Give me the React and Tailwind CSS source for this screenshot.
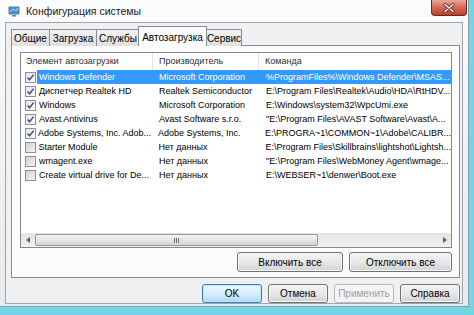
import React from 'react';

const font = "font-['Liberation_Sans',Arial,sans-serif]";

const rows = [
  { on: true, sel: true, name: 'Windows Defender', maker: 'Microsoft Corporation', cmd: '%ProgramFiles%\\Windows Defender\\MSAS...' },
  { on: true, name: 'Диспетчер Realtek HD', maker: 'Realtek Semiconductor', cmd: 'E:\\Program Files\\Realtek\\Audio\\HDA\\RtHDV...' },
  { on: true, name: 'Windows', maker: 'Microsoft Corporation', cmd: 'E:\\Windows\\system32\\WpcUmi.exe' },
  { on: true, name: 'Avast Antivirus', maker: 'Avast Software s.r.o.', cmd: '"E:\\Program Files\\AVAST Software\\Avast\\A...' },
  { on: true, name: 'Adobe Systems, Inc. Adob...', maker: 'Adobe Systems, Inc.', cmd: 'E:\\PROGRA~1\\COMMON~1\\Adobe\\CALIBR...' },
  { on: false, name: 'Starter Module', maker: 'Нет данных', cmd: 'E:\\Program Files\\Skillbrains\\lightshot\\Lightsh...' },
  { on: false, name: 'wmagent.exe', maker: 'Нет данных', cmd: '"E:\\Program Files\\WebMoney Agent\\wmage...' },
  { on: false, name: 'Create virtual drive for De...', maker: 'Нет данных', cmd: 'E:\\WEBSER~1\\denwer\\Boot.exe' },
];

const tabs = [
  { label: 'Общие', w: 'w-[38px]' },
  { label: 'Загрузка', w: 'w-[47px]' },
  { label: 'Службы', w: 'w-[43px]' },
  { label: 'Автозагрузка', w: 'w-[69px]', active: true },
  { label: 'Сервис', w: 'w-[36px]' },
];

function CheckBox({ on }) {
  return (
    <div
      className={`w-[11px] h-[11px] border border-[#8e8f8f] flex items-center justify-center ${
        on ? 'bg-linear-to-br from-[#e4e4e4] to-[#ffffff]' : 'bg-linear-to-br from-[#d2d2d2] to-[#f4f4f4]'
      }`}
    >
      {on && (
        <svg width="9" height="9" viewBox="0 0 9 9">
          <path d="M1.6 4.4 L3.6 6.8 L7.6 1.6" fill="none" stroke="#3b4f88" strokeWidth="1.5" />
        </svg>
      )}
    </div>
  );
}

function Btn({ children, className = '', primary, disabled }) {
  return (
    <div
      className={`h-[19px] rounded-[3px] border flex items-center justify-center text-[10px] ${className} ${
        disabled
          ? 'border-[#b5b9bc] bg-[#f4f4f4] text-[#a0a0a0]'
          : primary
          ? 'border-[#3c7fb1] bg-linear-to-b from-[#eaf6fd] via-[#d9f0fc] to-[#a7d9f5] text-black shadow-[inset_0_0_0_1px_#bfe6f9]'
          : 'border-[#707070] bg-linear-to-b from-[#f2f2f2] via-[#e8e8e8] to-[#d2d2d2] text-black shadow-[inset_0_0_0_1px_#fafafa]'
      }`}
    >
      {children}
    </div>
  );
}

export default function App() {
  return (
    <div className={`w-[474px] h-[315px] overflow-hidden bg-[#74d5e6] ${font}`}>
      {/* window frame */}
      <div className="w-[469px] h-[307px] bg-linear-to-b from-[#fbfcfd] via-[#eef2f6] to-[#e6ebf0] border-r border-b border-[#8a9aa8] flex flex-col">
        {/* title bar */}
        <div className="h-[22px] flex items-start">
          <div className="flex items-center h-[22px] pl-[8px] gap-[6px] flex-1">
            <svg width="12" height="11" viewBox="0 0 12 11">
              <rect x="0.5" y="0.5" width="11" height="8" rx="1" fill="#6d7f93" />
              <rect x="1.5" y="1.5" width="9" height="6" fill="#3f8ee0" />
              <path d="M2 6 L5 3 L8 5 L10 2" stroke="#bfe3ff" strokeWidth="1" fill="none" />
              <rect x="4" y="9" width="4" height="1.5" fill="#6d7f93" />
            </svg>
            <span className="text-[10.5px] text-[#1a1a1a] leading-none">Конфигурация системы</span>
          </div>
          <div className="w-[36px] h-[16px] mr-[1px] rounded-b-[4px] border border-t-0 border-[#6b2a22] bg-linear-to-b from-[#e8a89b] via-[#d36a56] to-[#c0402b] flex items-center justify-center">
            <svg width="12" height="10" viewBox="0 0 12 10">
              <path d="M2 1.5 L10 8.5 M10 1.5 L2 8.5" stroke="#5a1f17" strokeWidth="3" strokeLinecap="round" />
              <path d="M2 1.5 L10 8.5 M10 1.5 L2 8.5" stroke="#ffffff" strokeWidth="1.6" strokeLinecap="round" />
            </svg>
          </div>
        </div>

        {/* client area */}
        <div className="ml-[5px] w-[458px] h-[282px] border border-[#a0a6ad] bg-[#f0f0f0] pl-[5px] pt-[4px] flex flex-col">
          {/* tabs */}
          <div className="flex items-end h-[19px] relative z-10">
            {tabs.map((t) =>
              t.active ? (
                <div
                  key={t.label}
                  className={`${t.w} h-[20px] -mx-[1px] border border-b-0 border-[#898c95] bg-[#fcfcfc] flex items-start pt-[3px] justify-center text-[10px] text-black`}
                >
                  {t.label}
                </div>
              ) : (
                <div
                  key={t.label}
                  className={`${t.w} h-[17px] border border-b-0 border-r-0 last:border-r border-[#898c95] bg-linear-to-b from-[#f2f2f2] to-[#e0e0e0] flex items-center justify-center text-[10px] text-black`}
                >
                  {t.label}
                </div>
              )
            )}
          </div>

          {/* tab panel */}
          <div className="-mt-[1px] w-[449px] h-[234px] border border-[#898c95] bg-[#fcfcfc] pl-[8px] pt-[6px] flex flex-col">
            {/* list view */}
            <div className="w-[432px] h-[196px] border border-[#828790] bg-white flex flex-col">
              <div className="h-[17px] flex items-center text-[9px] text-[#2e2e2e]">
                <div className="w-[132px] h-full flex items-center pl-[5px] border-r border-[#e5e5e5]">Элемент автозагрузки</div>
                <div className="w-[106px] h-full flex items-center pl-[6px] border-r border-[#e5e5e5]">Производитель</div>
                <div className="flex-1 h-full flex items-center pl-[6px]">Команда</div>
              </div>
              <div className="flex-1 flex flex-col">
                {rows.map((r) => (
                  <div key={r.name} className="h-[14px] flex items-center text-[9px] leading-none">
                    <div className="w-[16px] pl-[4px] flex items-center">
                      <CheckBox on={r.on} />
                    </div>
                    <div className={`flex-1 h-full flex items-center ${r.sel ? 'bg-[#3399ff] text-white' : 'text-black'}`}>
                      <div className="w-[116px] pl-[2px] whitespace-nowrap overflow-hidden">{r.name}</div>
                      <div className="w-[106px] pl-[6px] whitespace-nowrap overflow-hidden">{r.maker}</div>
                      <div className="flex-1 pl-[7px] whitespace-nowrap overflow-hidden">{r.cmd}</div>
                    </div>
                  </div>
                ))}
              </div>
              {/* horizontal scrollbar */}
              <div className="h-[14px] bg-linear-to-b from-[#e3e3e3] to-[#f1f1f1] flex items-center">
                <div className="w-[14px] h-full flex items-center justify-center">
                  <svg width="5" height="6" viewBox="0 0 5 6"><path d="M4 0 L0 3 L4 6 Z" fill="#5b5b5b" /></svg>
                </div>
                <div className="w-[283px] h-[12px] rounded-[2px] border border-[#979797] bg-linear-to-b from-[#f4f4f4] via-[#e6e6e6] to-[#d3d3d3] flex items-center justify-center">
                  <div className="flex gap-[1px]">
                    <div className="w-[1px] h-[5px] bg-[#6b6b6b]" />
                    <div className="w-[1px] h-[5px] bg-[#6b6b6b]" />
                    <div className="w-[1px] h-[5px] bg-[#6b6b6b]" />
                  </div>
                </div>
                <div className="flex-1" />
                <div className="w-[14px] h-full flex items-center justify-center">
                  <svg width="5" height="6" viewBox="0 0 5 6"><path d="M1 0 L5 3 L1 6 Z" fill="#5b5b5b" /></svg>
                </div>
              </div>
            </div>

            {/* enable / disable all */}
            <div className="w-[432px] mt-[4px] flex justify-end gap-[6px]">
              <Btn className="w-[106px] h-[20px]">Включить все</Btn>
              <Btn className="w-[103px] h-[20px]">Отключить все</Btn>
            </div>
          </div>

          {/* dialog buttons */}
          <div className="w-[449px] mt-[6px] flex justify-end gap-[6px]">
            <Btn className="w-[60px]" primary>OK</Btn>
            <Btn className="w-[60px]">Отмена</Btn>
            <Btn className="w-[60px]" disabled>Применить</Btn>
            <Btn className="w-[60px]">Справка</Btn>
          </div>
        </div>
      </div>
    </div>
  );
}
